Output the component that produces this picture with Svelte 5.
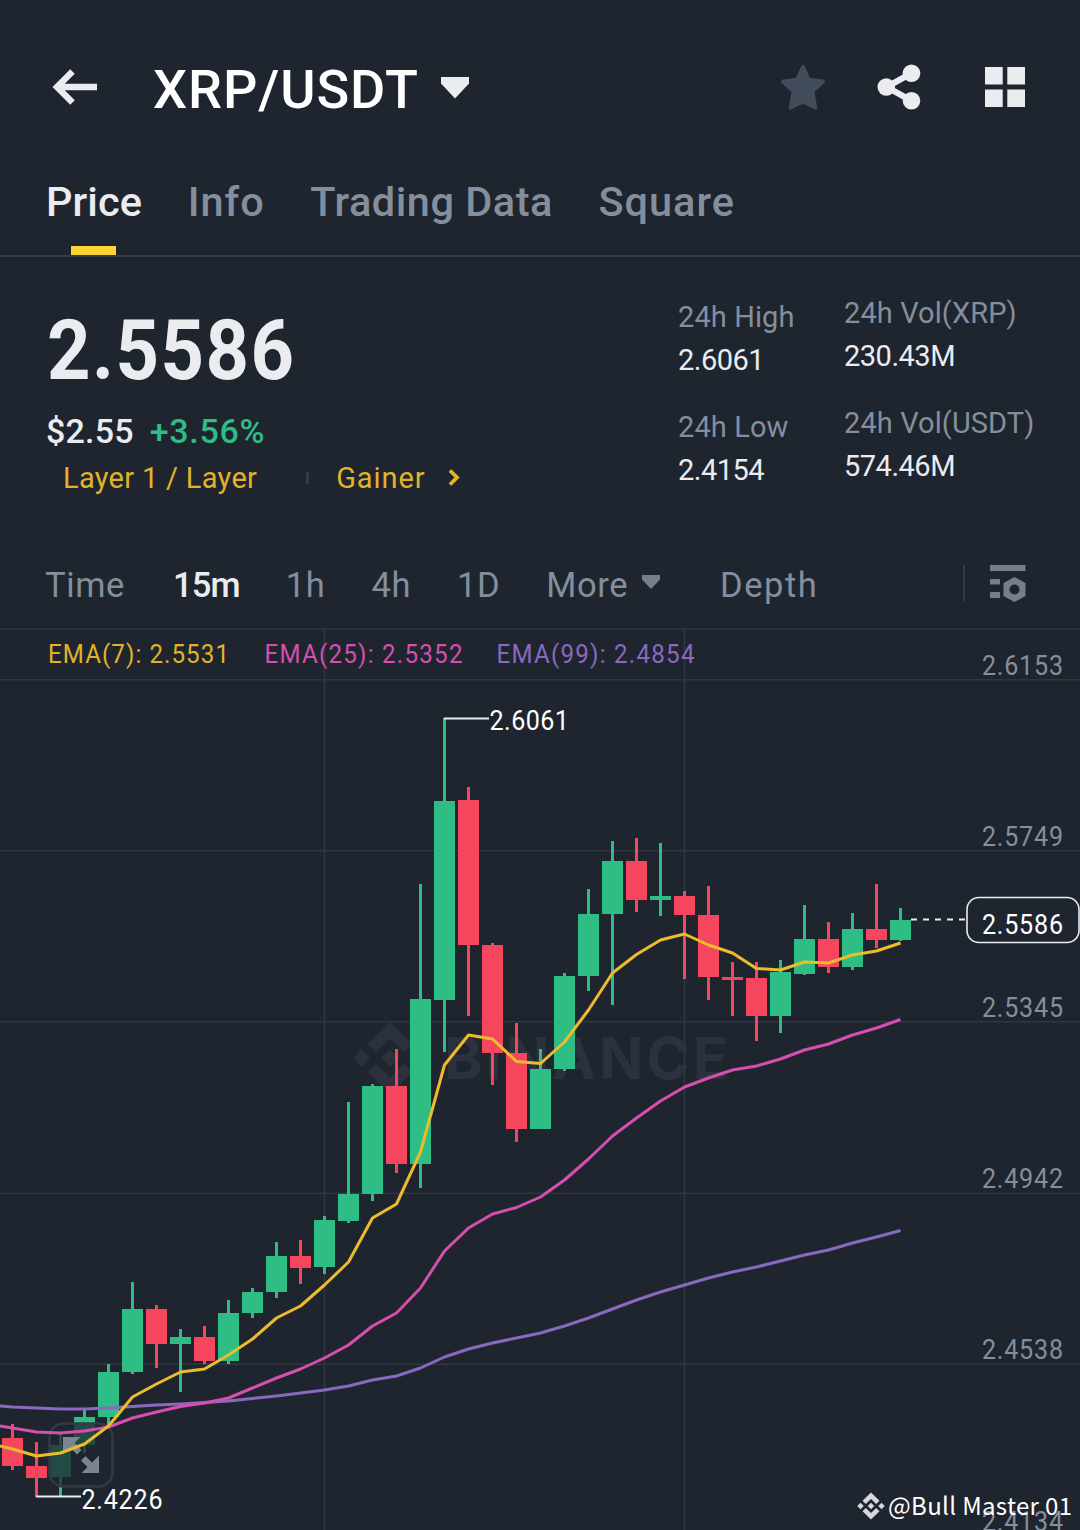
<script lang="ts">
	type Candle = [high: number, top: number, bottom: number, low: number, up: boolean];

	const tabs = [
		{ name: 'Price', spacing: 'tight' },
		{ name: 'Info', spacing: 'wide' },
		{ name: 'Trading Data', spacing: '' },
		{ name: 'Square', spacing: 'wide' }
	];
	const intervals = ['Time', '15m', '1h', '4h', '1D'];

	let activeTab = $state('Price');
	let activeInterval = $state('15m');

	const stats = [
		[
			{ label: '24h High', value: '2.6061' },
			{ label: '24h Low', value: '2.4154' }
		],
		[
			{ label: '24h Vol(XRP)', value: '230.43M' },
			{ label: '24h Vol(USDT)', value: '574.46M' }
		]
	];

	const candles: Candle[] = [
		[1424, 1438, 1466, 1470, false],
		[1442, 1466, 1478, 1497, false],
		[1432, 1445, 1477, 1497, true],
		[1410, 1417, 1445, 1453, true],
		[1364, 1372, 1417, 1425, true],
		[1282, 1309, 1372, 1374, true],
		[1305, 1309, 1344, 1368, false],
		[1329, 1337, 1344, 1392, true],
		[1326, 1337, 1361, 1364, false],
		[1300, 1313, 1361, 1364, true],
		[1288, 1292, 1313, 1318, true],
		[1242, 1256, 1292, 1298, true],
		[1240, 1256, 1268, 1284, false],
		[1216, 1220, 1267, 1274, true],
		[1102, 1194, 1221, 1223, true],
		[1084, 1086, 1194, 1201, true],
		[1049, 1086, 1164, 1173, false],
		[884, 999, 1164, 1188, true],
		[718, 801, 1000, 1052, true],
		[787, 800, 945, 1016, false],
		[943, 945, 1053, 1085, false],
		[1023, 1053, 1129, 1142, false],
		[1049, 1069, 1129, 1129, true],
		[973, 976, 1069, 1071, true],
		[889, 914, 976, 991, true],
		[841, 861, 914, 1005, true],
		[838, 861, 900, 912, false],
		[843, 896, 900, 916, true],
		[891, 896, 915, 979, false],
		[886, 915, 977, 1000, false],
		[962, 977, 980, 1016, false],
		[962, 978, 1016, 1041, false],
		[960, 972, 1016, 1033, true],
		[905, 939, 974, 975, true],
		[922, 939, 967, 973, false],
		[913, 929, 967, 970, true],
		[884, 929, 940, 948, false],
		[908, 920, 940, 941, true]
	];

	const ema7 = [
		1449, 1456, 1453, 1444, 1426, 1397, 1384, 1372, 1369, 1355, 1339, 1318, 1306, 1285, 1262, 1218,
		1204, 1152, 1065, 1035, 1039, 1061.5, 1063.5, 1042, 1010, 973, 954.5, 940, 934, 945, 953, 968.5,
		970, 962, 963, 955, 951, 943
	];
	const ema25 = [
		1428, 1432, 1433, 1431, 1427, 1418, 1412, 1406.5, 1403, 1398, 1388, 1378, 1369, 1358, 1345, 1326,
		1313, 1288, 1251, 1228, 1214, 1207.5, 1197, 1180, 1159, 1136, 1118, 1101, 1087, 1078, 1070, 1066,
		1059, 1050, 1044, 1035, 1028, 1019.5
	];
	const ema99 = [
		1407, 1408, 1409, 1409, 1408, 1406.5, 1405, 1404, 1402.5, 1401, 1398.5, 1396, 1393, 1390, 1386,
		1380, 1376, 1368, 1357, 1349, 1343, 1338, 1333, 1326, 1318, 1309, 1300, 1292, 1285, 1278, 1272,
		1267, 1261, 1255, 1250, 1243, 1237, 1230.5
	];

	const legend = [
		{ text: 'EMA(7): 2.5531', x: 48, width: 181, cls: 'legend ema7' },
		{ text: 'EMA(25): 2.5352', x: 264.5, width: 198, cls: 'legend ema25' },
		{ text: 'EMA(99): 2.4854', x: 496.5, width: 198, cls: 'legend ema99' }
	];

	const ticks = [
		{ price: '2.6153', y: 680 },
		{ price: '2.5749', y: 851 },
		{ price: '2.5345', y: 1022 },
		{ price: '2.4942', y: 1193.5 },
		{ price: '2.4538', y: 1364.5 },
		{ price: '2.4134', y: 1536 }
	];

	// chart labels are set narrow, with the letters spread over a fixed width
	const NARROW = 0.93;

	const cx = (i: number) => 12.5 + i * 24;

	function line(values: number[], start: number) {
		return `0,${start} ` + values.map((y, i) => `${cx(i)},${y}`).join(' ');
	}
</script>

{#snippet label(text: string, x: number, y: number, width: number, cls: string)}
	<text class={cls} transform="translate({x} {y}) scale({NARROW} 1)" textLength={width / NARROW}>{text}</text>
{/snippet}

<div class="app">
	<header class="header">
		<button class="back" aria-label="Back">
			<svg width="48" height="40" viewBox="0 0 48 40" fill="none" stroke="#eaecef" stroke-width="6.4">
				<path d="M23.500 4.500 8 20l15.500 15.500M48 20H7" />
			</svg>
		</button>
		<h1>XRP/USDT</h1>
		<svg class="caret" width="28" height="22" viewBox="0 0 28 22"><path d="M0 0h28v6.500L14 21.500 0 6.500z" fill="#eaecef" /></svg>
		<div class="actions">
			<svg width="46" height="46" viewBox="0 0 46 46">
				<path d="M23 3l5.600 12.800 14.400 1.700-10.600 9.800 2.800 16.200L23 37.500 10.800 43.500l2.800-16.200L3 17.500l14.400-1.700z" fill="#434c5a" stroke="#434c5a" stroke-width="4" stroke-linejoin="round" />
			</svg>
			<svg width="44" height="46" viewBox="0 0 44 46" fill="#eaecef">
				<path d="M34 9.500 9.500 23 34 36.500" fill="none" stroke="#eaecef" stroke-width="6" />
				<circle cx="34.500" cy="9.300" r="8.800" />
				<circle cx="9.300" cy="23" r="8.800" />
				<circle cx="34.500" cy="36.700" r="8.800" />
			</svg>
			<svg width="40" height="40" viewBox="0 0 40 40" fill="#eaecef">
				<path d="M0 0h17.700v17.500H0zM22.300 0H40v17.500H22.300zM0 22.500h17.700V40H0zM22.300 22.500H40V40H22.300z" />
			</svg>
		</div>
	</header>

	<nav class="tabs">
		{#each tabs as tab}
			<button class="tab {tab.spacing}" class:active={tab.name === activeTab} onclick={() => (activeTab = tab.name)}>
				{tab.name}
			</button>
		{/each}
	</nav>

	<section class="ticker">
		<div class="summary">
			<div class="last">2.5586</div>
			<div class="change">
				<span>$2.55</span>
				<span class="up">+3.56%</span>
			</div>
			<div class="tags">
				<span>Layer 1 / Layer</span>
				<i class="tag-divider"></i>
				<span class="gainer">Gainer</span>
				<svg width="12" height="18" viewBox="0 0 12 18" fill="none" stroke="#e2b32a" stroke-width="3.800"><path d="M2 1.500l7 7-7 7" /></svg>
			</div>
		</div>
		{#each stats as column}
			<div class="stats">
				{#each column as stat}
					<div class="stat">
						<div class="label">{stat.label}</div>
						<div class="value">{stat.value}</div>
					</div>
				{/each}
			</div>
		{/each}
	</section>

	<div class="intervals">
		{#each intervals as interval}
			<button class="interval" class:active={interval === activeInterval} onclick={() => (activeInterval = interval)}>
				{interval}
			</button>
		{/each}
		<button class="interval more">
			More
			<svg width="18" height="14" viewBox="0 0 18 14"><path d="M0 0h18v4.500L9 14 0 4.500z" fill="#767e8c" /></svg>
		</button>
		<button class="interval depth">Depth</button>
		<div class="tools">
			<i class="tool-divider"></i>
			<svg width="36" height="38" viewBox="0 0 36 38" fill="#767e8c">
				<path d="M0 1h35.500v6H0zM0 15h10v5.500H0zM0 28h10v6H0z" />
				<path fill-rule="evenodd" d="M24.500 13l11 6v13l-11 6-11-6V19zM24.500 20.500a5 5 0 1 0 0 10 5 5 0 0 0 0-10z" />
			</svg>
		</div>
	</div>

	<svg class="chart" width="1080" height="900" viewBox="0 630 1080 900">
		<g class="watermark">
			<path d="M390 1022l22.500 22-8.500 8.500-14-14-14 14-8.500-8.500zM390 1094l22.500-22-8.500-8.500-14 14-14-14-8.500 8.500zM361.500 1049.500l8.500 8.500-8.500 8.500-8.500-8.500zM390 1049.500l8.500 8.500-8.500 8.500-8.500-8.500zM418.500 1049.500l8.500 8.500-8.500 8.500-8.500-8.500z" />
			<text x="444" y="1079" textLength="284">BINANCE</text>
		</g>

		<g class="grid">
			{#each ticks as tick}
				<path d="M0 {tick.y - 0.25}H1080" />
			{/each}
			<path d="M324.500 630V1530M684.500 630V1530" />
		</g>

		{#each candles as [high, top, bottom, low, up], i}
			<g class={up ? 'rise' : 'fall'}>
				<rect x={cx(i) - 1.5} y={high} width="3" height={low - high} />
				<rect x={cx(i) - 10.5} y={top} width="21" height={bottom - top} />
			</g>
		{/each}

		<rect class="expand" x="49.500" y="1423.500" width="63" height="63" rx="14" />
		<path class="expand-arrows" d="M63 1437h17.500l-6 6 7 7-4.500 4.500-7-7-7 7zM99 1473h-17.500l6-6-6.500-6.500 4.500-4.500 6.500 6.500 7-7z" />

		<polyline class="ma ema99" points={line(ema99, 1406)} />
		<polyline class="ma ema25" points={line(ema25, 1426)} />
		<polyline class="ma ema7" points={line(ema7, 1446)} />

		{#each legend as item}
			{@render label(item.text, item.x, 663, item.width, item.cls)}
		{/each}

		{#each ticks as tick}
			{@render label(tick.price, 982, tick.y - 5.5, 81, 'tick')}
		{/each}

		<path class="leader" d="M444 718.500H489M36 1496.500H81" />
		{@render label('2.6061', 489.5, 729.5, 79.5, 'mark')}
		{@render label('2.4226', 81.5, 1508.5, 81, 'mark')}

		<path class="last-line" d="M911 919.500H966" />
		<rect class="last-tag" x="967" y="897.500" width="112" height="45" rx="12" />
		{@render label('2.5586', 982, 933.5, 81, 'mark')}

		<g class="author">
			<path d="M871 1492.500l8.500 8.300-3.300 3.300-5.200-5.200-5.200 5.200-3.300-3.300zM871 1519.500l8.500-8.300-3.300-3.300-5.200 5.200-5.200-5.200-3.300 3.300zM860.500 1502.700l3.300 3.300-3.300 3.300-3.300-3.300zM871 1502.700l3.300 3.300-3.300 3.300-3.300-3.300zM881.500 1502.700l3.300 3.300-3.300 3.300-3.300-3.300z" />
			<text x="888" y="1515" textLength="184">@Bull Master 01</text>
		</g>
	</svg>
</div>

<style>
	:global(body) {
		background: #1f252f;
	}

	.app {
		width: 1080px;
		height: 1530px;
		overflow: hidden;
		background: #1f252f;
		color: #eaecef;
		font-family: Roboto, 'Noto Sans', sans-serif;
	}

	button {
		padding: 0;
		border: none;
		background: none;
		color: inherit;
		font: inherit;
		cursor: pointer;
	}

	svg {
		display: block;
		flex: none;
	}

	.header {
		display: flex;
		align-items: center;
		box-sizing: border-box;
		height: 148px;
		padding: 26px 55px 0 49px;
	}

	h1 {
		margin: 5px 0 0 56px;
		font-size: 54px;
		font-weight: 500;
		line-height: 64px;
		letter-spacing: 0.9px;
		color: #fff;
	}

	.caret {
		margin: 2px 0 0 22px;
	}

	.actions {
		display: flex;
		align-items: center;
		margin-left: auto;
	}

	.actions svg:nth-child(2) {
		margin: 0 64px 0 51px;
	}

	.tabs {
		display: flex;
		gap: 45.5px;
		height: 107px;
		padding-left: 46px;
		border-bottom: 2px solid #343b46;
	}

	.tab {
		position: relative;
		font-size: 41.5px;
		font-weight: 500;
		color: #848e9c;
		letter-spacing: 0.5px;
	}

	.tab.tight {
		letter-spacing: 0.1px;
	}

	.tab.wide {
		letter-spacing: 1px;
	}

	.tab.active {
		color: #eaecef;
	}

	.tab.active::after {
		content: '';
		position: absolute;
		left: 50%;
		bottom: 0;
		width: 45px;
		height: 9px;
		margin-left: -23px;
		background: #fcd535;
	}

	.ticker {
		display: flex;
		height: 284px;
	}

	.summary {
		width: 632px;
		padding: 46px 0 0 46px;
	}

	.last {
		width: max-content;
		margin-left: 1px;
		font-size: 82.5px;
		font-weight: 700;
		line-height: 96px;
		letter-spacing: 1.6px;
		transform: scaleX(0.92);
		transform-origin: left;
	}

	.change {
		display: flex;
		gap: 16px;
		margin-top: 12px;
		font-size: 34px;
		font-weight: 500;
		line-height: 40px;
		letter-spacing: 0.2px;
	}

	.up {
		letter-spacing: 0.7px;
		color: #2ebd85;
	}

	.tags {
		display: flex;
		align-items: center;
		margin: 9px 0 0 17px;
		font-size: 29px;
		line-height: 36px;
		letter-spacing: 0.3px;
		color: #e2b32a;
	}

	.tag-divider {
		width: 3px;
		height: 12px;
		margin: 0 27px 0 49px;
		background: #343b46;
	}

	.gainer {
		margin-right: 23px;
		letter-spacing: 0.9px;
	}

	.stats {
		display: flex;
		flex-direction: column;
		gap: 27px;
		width: 166px;
		padding-top: 40px;
		font-size: 29px;
		line-height: 40px;
		white-space: nowrap;
	}

	.stats:last-child {
		padding-top: 36px;
	}

	.label {
		margin-bottom: 3px;
		letter-spacing: 0.1px;
		color: #848e9c;
	}

	.value {
		letter-spacing: -0.5px;
	}

	.intervals {
		display: flex;
		align-items: center;
		gap: 46px;
		height: 87px;
		padding: 0 54px 0 45px;
		border-bottom: 2px solid #2a313b;
	}

	.interval {
		font-size: 34.5px;
		letter-spacing: 0.6px;
		color: #848e9c;
	}

	.interval.active {
		margin: 0 0 0 2px;
		font-weight: 500;
		letter-spacing: -0.8px;
		color: #eaecef;
	}

	.more {
		display: flex;
		align-items: center;
		gap: 14px;
		margin-right: 14px;
	}

	.more svg {
		margin-bottom: 6px;
	}

	.interval.depth {
		letter-spacing: 1.5px;
	}

	.tools {
		display: flex;
		align-items: center;
		gap: 25px;
		margin: 0 0 4px auto;
	}

	.tool-divider {
		width: 2px;
		height: 36px;
		background: #343b46;
	}

	.watermark {
		fill: #2c323d;
		font-family: Inter, sans-serif;
		font-size: 58px;
		font-weight: 700;
	}

	.grid {
		fill: none;
		stroke: #303742;
		stroke-width: 1.5;
	}

	.rise {
		fill: #2ebd85;
	}

	.fall {
		fill: #f6465d;
	}

	.expand {
		fill: rgba(31, 37, 47, 0.75);
		stroke: #333a45;
		stroke-width: 2.5;
	}

	.expand-arrows {
		fill: #7c8391;
	}

	.ma {
		fill: none;
		stroke-width: 3;
		stroke-linejoin: round;
	}

	.ma.ema7 {
		stroke: #ecbc2c;
	}

	.ma.ema25 {
		stroke: #d54fae;
	}

	.ma.ema99 {
		stroke: #8a68bf;
	}

	.legend {
		font-size: 26px;
	}

	.legend.ema7 {
		fill: #e2b32a;
	}

	.legend.ema25 {
		fill: #d54fae;
	}

	.legend.ema99 {
		fill: #8a68bf;
	}

	.tick {
		font-size: 27px;
		fill: #848e9c;
	}

	.mark {
		font-size: 27px;
		fill: #fff;
	}

	.leader {
		fill: none;
		stroke: #eaecef;
		stroke-width: 2;
	}

	.last-line {
		stroke: #eaecef;
		stroke-width: 2;
		stroke-dasharray: 6 6;
	}

	.last-tag {
		fill: #1f252f;
		stroke: #eaecef;
		stroke-width: 1.6;
	}

	.author {
		fill: #fff;
		font-family: 'Noto Sans CJK SC', sans-serif;
		font-size: 24px;
	}

	.author path {
		fill: #d5d8dc;
	}
</style>
